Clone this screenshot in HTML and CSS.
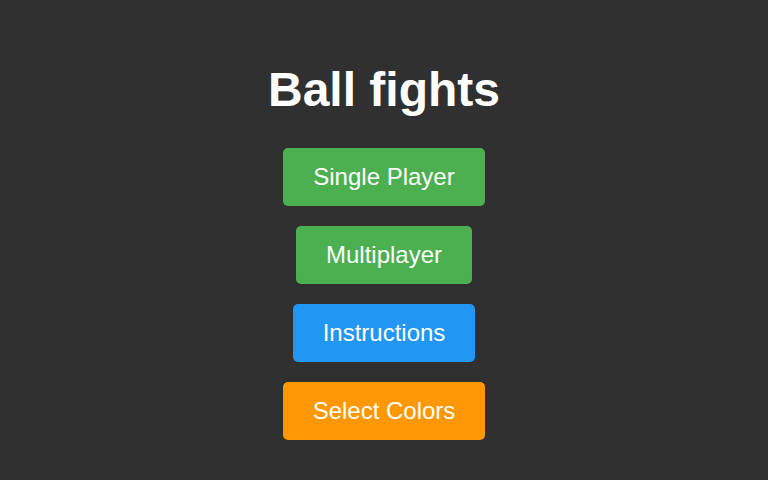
FILE: index.html
```html
<!DOCTYPE html>
<html lang="en">

<head>
    <meta charset="UTF-8">
    <meta name="viewport" content="width=device-width, initial-scale=1.0">
    <title>Ball fights</title>
    <link rel="stylesheet" href="styles.css">
</head>

<body>
    <div class="menu">
        <h1>Ball fights</h1>
        <div class="buttons">
            <button class="btn green" id="singleBtn">Single Player</button>
            <button class="btn green" id="multiBtn">Multiplayer</button>
            <button class="btn blue" id="instructionsBtn">Instructions</button>
            <button class="btn orange" id="colorsBtn">Select Colors</button>
        </div>
    </div>
</body>

</html>
```

FILE: styles.css
```css
body {
    font-family: 'Liberation Sans', Arial, sans-serif;
    background-color: #303030;
    color: #fff;
    margin: 0;
    padding: 30px 0 0;
}

.menu {
    display: flex;
    flex-direction: column;
    align-items: center;
}

h1 {
    font-size: 48px;
    font-weight: bold;
    margin: 32px 0 31px;
}

.buttons {
    display: flex;
    flex-direction: column;
    align-items: center;
    gap: 20px;
}

.btn {
    font-family: inherit;
    font-size: 24px;
    color: #fff;
    border: none;
    border-radius: 5px;
    padding: 15px 30px;
    cursor: pointer;
}

.green {
    background-color: #4caf50;
}

.blue {
    background-color: #2196f3;
}

.orange {
    background-color: #ff9800;
}
```
